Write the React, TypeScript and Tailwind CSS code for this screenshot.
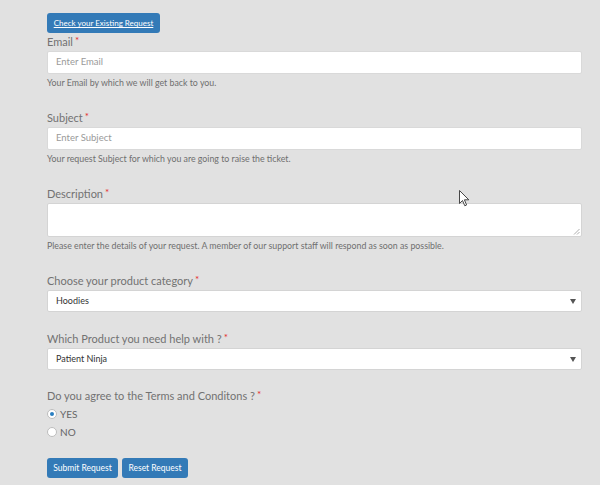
import React from "react";

const font = { fontFamily: "Lato, 'Liberation Sans', sans-serif" };

function Req() {
  return <span className="text-[#e52b2b] text-[10px] relative -top-[2px] ml-[2px]">*</span>;
}

function Label({ children, className = "" }: { children: React.ReactNode; className?: string }) {
  return (
    <div className={"h-[14px] leading-[14px] text-[11px] text-[#727272] " + className}>
      {children}
      <Req />
    </div>
  );
}

function Help({ children }: { children: React.ReactNode }) {
  return <div className="mt-[3px] h-[12px] leading-[12px] text-[8.8px] text-[#6f6f6f]">{children}</div>;
}

function Select({ value }: { value: string }) {
  return (
    <div className="mt-[2px] h-[22px] bg-white rounded-[2px] border border-[#d4d4d4] flex items-center justify-between pl-[8px] pr-[5px]">
      <span className="text-[9px] text-[#333]">{value}</span>
      <svg width="6" height="5" viewBox="0 0 6 5">
        <path d="M0 0 L6 0 L3 5 Z" fill="#555" />
      </svg>
    </div>
  );
}

function Radio({ checked, label }: { checked?: boolean; label: string }) {
  return (
    <div className="h-[12px] flex items-center gap-[3px]">
      <span className="w-[10px] h-[10px] rounded-full bg-white border border-[#bdbdbd] flex items-center justify-center">
        {checked && <span className="w-[4px] h-[4px] rounded-full bg-[#2a7fc1]" />}
      </span>
      <span className="text-[10px] text-[#666] leading-[12px]">{label}</span>
    </div>
  );
}

export default function App() {
  return (
    <div className="relative w-[600px] h-[485px] bg-[#e1e1e1] overflow-hidden" style={font}>
      <div className="pl-[47px] pt-[13px] w-[582px]">
        <button className="block h-[20px] w-[113px] bg-[#337ab7] rounded-[3px] text-white text-[8px] underline">
          Check your Existing Request
        </button>

        <Label className="mt-[2px]">Email</Label>
        <div className="mt-[2px] h-[23px] bg-white rounded-[2px] border border-[#d9d9d9] flex items-center pl-[8px] text-[9.5px] text-[#9a9a9a]">
          Enter Email
        </div>
        <Help>Your Email by which we will get back to you.</Help>

        <Label className="mt-[22px]">Subject</Label>
        <div className="mt-[2px] h-[23px] bg-white rounded-[2px] border border-[#d9d9d9] flex items-center pl-[8px] text-[9.5px] text-[#9a9a9a]">
          Enter Subject
        </div>
        <Help>Your request Subject for which you are going to raise the ticket.</Help>

        <Label className="mt-[22px]">Description</Label>
        <div className="relative mt-[2px] h-[34px] bg-white rounded-[2px] border border-[#d4d4d4]">
          <svg className="absolute right-[1px] bottom-[1px]" width="7" height="7" viewBox="0 0 7 7">
            <path d="M6.5 1 L1 6.5 M6.5 4 L4 6.5" stroke="#999" strokeWidth="0.8" />
          </svg>
        </div>
        <Help>
          Please enter the details of your request. A member of our support staff will respond as soon as possible.
        </Help>

        <Label className="mt-[22px]">Choose your product category</Label>
        <Select value="Hoodies" />

        <Label className="mt-[20px]">Which Product you need help with ?</Label>
        <Select value="Patient Ninja" />

        <Label className="mt-[19px]">Do you agree to the Terms and Conditons ?</Label>
        <div className="mt-[5px] flex flex-col gap-[6px]">
          <Radio checked label="YES" />
          <Radio label="NO" />
        </div>

        <div className="mt-[20px] flex gap-[4px]">
          <button className="h-[20px] w-[71px] bg-[#337ab7] rounded-[3px] text-white text-[8.5px]">
            Submit Request
          </button>
          <button className="h-[20px] w-[66px] bg-[#337ab7] rounded-[3px] text-white text-[8.5px]">
            Reset Request
          </button>
        </div>
      </div>

      <svg className="absolute left-[459px] top-[190px]" width="12" height="18" viewBox="0 0 12 18">
        <path d="M0.5 0.5 L0.5 13.5 L3.5 10.5 L5.8 15.8 L7.6 15 L5.4 9.8 L9.8 9.8 Z" fill="#fff" stroke="#333" strokeWidth="0.9" strokeLinejoin="round" />
      </svg>
    </div>
  );
}
